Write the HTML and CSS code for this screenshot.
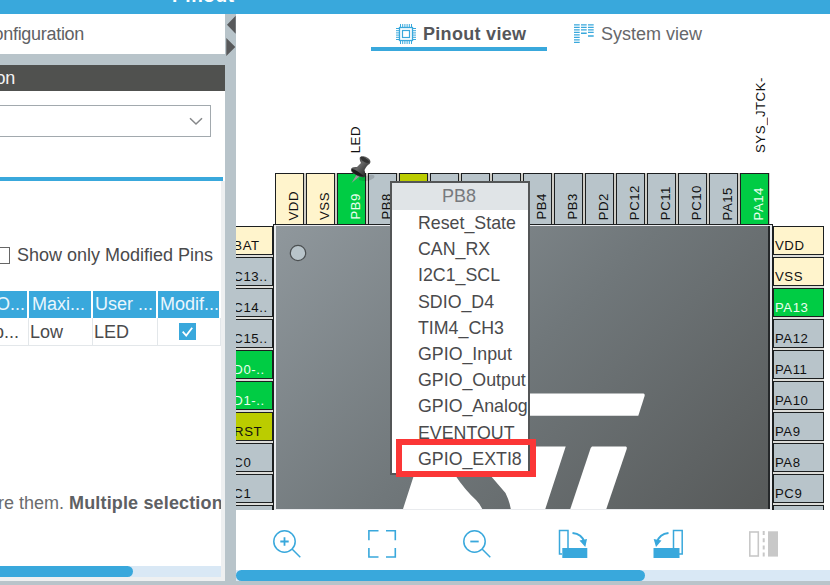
FILE: index.html
```html
<!DOCTYPE html>
<html lang="en">
<head>
    <meta charset="UTF-8">
    <meta name="viewport" content="width=device-width, initial-scale=1.0">
    <title>Pinout &amp; Configuration</title>
    <link rel="stylesheet" href="styles.css">
</head>

<body>
    <header class="topbar"><span>Pinout</span></header>

    <div class="main">
        <!-- left: gpio configuration -->
        <div class="side">
            <div class="side-tab"><span>Configuration</span></div>
            <div class="side-title"><span>Configuration</span></div>
            <div class="side-top">
                <div class="select">
                    <svg width="14" height="9" viewBox="0 0 14 9"><path d="M1 1.2L7 7L13 1.2" fill="none" stroke="#858789" stroke-width="1.5"/></svg>
                </div>
            </div>
            <div class="side-line"></div>
            <div class="side-body">
                <label class="modified"><span class="box"></span>Show only Modified Pins</label>
                <div class="table">
                    <div class="th">GPIO O...</div><div class="th">Maxi...</div><div class="th">User ...</div><div class="th">Modif...</div>
                    <div class="td">Outp...</div><div class="td">Low</div><div class="td">LED</div>
                    <div class="td center">
                        <span class="checked"><svg width="17" height="17" viewBox="0 0 17 17"><path d="M3.7 8.7L7.2 12.6L13.2 4.7" fill="none" stroke="#fff" stroke-width="1.8"/></svg></span>
                    </div>
                </div>
                <p class="hint"><span>configure them. <b>Multiple selection</b></span></p>
                <div class="scroll"><div class="thumb"></div></div>
            </div>
        </div>

        <div class="splitter">
            <svg width="11" height="44" viewBox="0 0 11 44"><path d="M10.7 1.7V19.7L2 10.7ZM1.3 24V42L10.3 33Z" fill="#58595b"/></svg>
        </div>

        <!-- right: chip view -->
        <div class="view">
            <nav class="tabs">
                <div class="tab active">
                    <svg width="20" height="20" viewBox="0 0 20 20" fill="none" stroke="#39a8dc">
                        <rect x="3.5" y="3.5" width="13" height="13" stroke-width="1.3"/>
                        <rect x="6.5" y="6.5" width="7" height="7" stroke-width="1.2"/>
                        <path d="M4.5 0V3M6.7 0V3M8.9 0V3M11.1 0V3M13.3 0V3M15.5 0V3M4.5 17V20M6.7 17V20M8.9 17V20M11.1 17V20M13.3 17V20M15.5 17V20M0 4.5H3M0 6.7H3M0 8.9H3M0 11.1H3M0 13.3H3M0 15.5H3M17 4.5H20M17 6.7H20M17 8.9H20M17 11.1H20M17 13.3H20M17 15.5H20"/>
                    </svg>
                    <span>Pinout view</span>
                </div>
                <div class="tab">
                    <svg width="20" height="20" viewBox="0 0 20 20" fill="none" stroke="#39a8dc" stroke-width="1.4">
                        <path d="M0 .9H5.7M0 3.400H5.700M0 5.900H5.700M0 8.400H5.700M0 10.900H5.700M0 13.400H5.700M0 15.900H5.700M0 18.400H5.700M7 .9H12.700M7 3.400H12.700M7 5.900H12.700M7 9.200H12.700M14 .9H19.700M14 3.400H19.700M14 5.900H19.700M14 8.400H19.700M14 12H19.700"/>
                    </svg>
                    <span>System view</span>
                </div>
            </nav>

            <div class="canvas">
                <div class="signals">
                    <span class="sig led">LED</span>
                    <span class="sig jtck">SYS_JTCK-</span>
                </div>
                <div class="pins-top">
                    <div class="pin power"><span>VDD</span></div>
                    <div class="pin power"><span>VSS</span></div>
                    <div class="pin used"><span>PB9</span></div>
                    <div class="pin"><span>PB8</span></div>
                    <div class="pin boot"><span>BO..</span></div>
                    <div class="pin"><span>PB7</span></div>
                    <div class="pin"><span>PB6</span></div>
                    <div class="pin"><span>PB5</span></div>
                    <div class="pin"><span>PB4</span></div>
                    <div class="pin"><span>PB3</span></div>
                    <div class="pin"><span>PD2</span></div>
                    <div class="pin"><span>PC12</span></div>
                    <div class="pin"><span>PC11</span></div>
                    <div class="pin"><span>PC10</span></div>
                    <div class="pin"><span>PA15</span></div>
                    <div class="pin used"><span>PA14</span></div>
                </div>
                <div class="chip-row">
                    <div class="pins-side left">
                        <div class="pin power">VBAT</div>
                        <div class="pin">PC13..</div>
                        <div class="pin">PC14..</div>
                        <div class="pin">PC15..</div>
                        <div class="pin used">PD0-..</div>
                        <div class="pin used">PD1-..</div>
                        <div class="pin boot">NRST</div>
                        <div class="pin">PC0</div>
                        <div class="pin">PC1</div>
                        <div class="pin"></div>
                    </div>
                    <div class="chip">
                        <!-- pin 1 mark and ST logo -->
                        <svg width="492" height="283" viewBox="276 227 492 283">
                            <defs>
                                <linearGradient id="body" gradientUnits="userSpaceOnUse" x1="330" y1="180" x2="700" y2="560">
                                    <stop offset="0" stop-color="#8f979c"/>
                                    <stop offset=".5" stop-color="#70777a"/>
                                    <stop offset="1" stop-color="#585b5b"/>
                                </linearGradient>
                            </defs>
                            <rect x="276" y="227" width="492" height="283" fill="url(#body)"/>
                            <circle cx="298" cy="254" r="7.7" fill="#b8c4ca" stroke="#4b4f51" stroke-width="1.2"/>
                            <g fill="#fff">
                                <path d="M440 394.5H643.5Q645 394.7 644.6 397L638.3 416.7H440Z"/>
                                <path d="M480 447.5H565.7L545.3 510H510.8Q509.500 502 505.5 494L490 476Z"/>
                                <path d="M592 447.5H626Q627.3 448 626.7 450L606.3 510H570.3L590.7 449Z"/>
                                <path d="M414 476L403 510H482.3Q480 505 476 501Q465 491 455 476Z"/>
                            </g>
                        </svg>
                    </div>
                    <div class="pins-side">
                        <div class="pin power">VDD</div>
                        <div class="pin power">VSS</div>
                        <div class="pin used">PA13</div>
                        <div class="pin">PA12</div>
                        <div class="pin">PA11</div>
                        <div class="pin">PA10</div>
                        <div class="pin">PA9</div>
                        <div class="pin">PA8</div>
                        <div class="pin">PC9</div>
                        <div class="pin"></div>
                    </div>
                </div>

                <svg class="pushpin" width="28" height="32" viewBox="0 0 28 32">
                    <defs>
                        <linearGradient id="pinMetal" x1="0" y1="0" x2="1" y2="1">
                            <stop offset="0" stop-color="#222"/>
                            <stop offset=".45" stop-color="#666"/>
                            <stop offset="1" stop-color="#111"/>
                        </linearGradient>
                    </defs>
                    <path d="M10 23L20 20Q27 19 25 23Q19 28 10 25Z" fill="#000" opacity=".15"/>
                    <path d="M8 19L2.5 28L11 21Z" fill="#999"/>
                    <path d="M2 14Q3 11.500 8 12L12 8Q10 4 11 2Q15 0 19 3Q23 6 20.500 9Q18 10 15.500 15Q17 20 15.500 22Q12 23 7 20Q1 17 2 14Z" fill="url(#pinMetal)"/>
                    <path d="M12 1.500Q17 2 20.500 7Q18 9 14.500 6.500Q11 4 12 1.500Z" fill="#333"/>
                    <path d="M3 14Q8 15 14.500 21Q8 21.500 4.500 18Q2 16 3 14Z" fill="#1b1b1b"/>
                </svg>
            </div>

            <div class="tools">
                <svg width="30" height="30" viewBox="0 0 30 30" fill="none" stroke="#39a8dc" stroke-width="1.5">
                    <circle cx="12.500" cy="12.500" r="10.700"/><path d="M20 20L28.300 28.300"/><path d="M8.300 12.500H16.700M12.500 8.300V16.700" stroke-width="1.800"/>
                </svg>
                <svg width="30" height="30" viewBox="0 0 30 30" fill="none" stroke="#39a8dc" stroke-width="1.600">
                    <path d="M11.500 1.700H1.900V11.300M19 1.700H28.300V11.300M1.900 19V28H11.500M19 28H28.300V19"/>
                </svg>
                <svg width="30" height="30" viewBox="0 0 30 30" fill="none" stroke="#39a8dc" stroke-width="1.500">
                    <circle cx="12.500" cy="12.500" r="10.700"/><path d="M20 20L28.300 28.300"/><path d="M8.300 12.500H16.700" stroke-width="1.800"/>
                </svg>
                <svg class="nudge" width="30" height="30" viewBox="0 0 30 30" fill="none" stroke="#39a8dc" stroke-width="1.500">
                    <path d="M4 25H1.500V1.600H10V19"/><path d="M14.500 4Q24 5 26.300 13" stroke-width="2"/>
                    <path d="M21.500 11.500L29 10L27.300 18Z" fill="#39a8dc" stroke="none"/>
                    <path d="M4.300 19H29.300V29H4.300Z" fill="#39a8dc" stroke="none"/>
                </svg>
                <svg class="nudge" width="30" height="30" viewBox="0 0 30 30" fill="none" stroke="#39a8dc" stroke-width="1.500">
                    <path d="M26 25H29.200V1.600H20.500V19"/><path d="M15.500 4Q6.500 5 4 13" stroke-width="2"/>
                    <path d="M.7 10L8.500 11.500L3 18Z" fill="#39a8dc" stroke="none"/>
                    <path d="M.5 19H26.500V29H.5Z" fill="#39a8dc" stroke="none"/>
                </svg>
                <svg class="nudge" width="30" height="30" viewBox="0 0 30 30" fill="none" stroke="#c8c8c8" stroke-width="1.600">
                    <rect x="1.800" y="3" width="8.500" height="24"/>
                    <path d="M15.700 2V27.500" stroke-width="2" stroke-dasharray="4 3.200"/>
                    <rect x="20" y="2.300" width="10" height="25.300" fill="#c8c8c8" stroke="none"/>
                </svg>
            </div>
            <div class="scroll"><div class="thumb"></div></div>
        </div>
    </div>

    <!-- pin function menu -->
    <div class="menu">
        <div class="menu-title">PB8</div>
        <div class="menu-item">Reset_State</div>
        <div class="menu-item">CAN_RX</div>
        <div class="menu-item">I2C1_SCL</div>
        <div class="menu-item">SDIO_D4</div>
        <div class="menu-item">TIM4_CH3</div>
        <div class="menu-item">GPIO_Input</div>
        <div class="menu-item">GPIO_Output</div>
        <div class="menu-item">GPIO_Analog</div>
        <div class="menu-item">EVENTOUT</div>
        <div class="menu-item">GPIO_EXTI8</div>
    </div>
    <div class="highlight"></div>
</body>

</html>
```
FILE: styles.css
```css
* {
    box-sizing: border-box;
}

body {
    display: flex;
    flex-direction: column;
    position: relative;
    width: 830px;
    height: 585px;
    margin: 0;
    overflow: hidden;
    background: #b8c4ca;
    color: #4a4a4c;
    font-family: "Liberation Sans", Arial, sans-serif;
    font-size: 18px;
}

svg {
    display: block;
    flex: none;
}

.topbar {
    flex: none;
    height: 14px;
    padding-left: 172px;
    overflow: hidden;
    background: #39a8dc;
    color: #fff;
    font-size: 19px;
    font-weight: bold;
    letter-spacing: 0.6px;
}

.topbar span {
    display: block;
    height: 20px;
    line-height: 20px;
    margin-top: -14px;
}

.main {
    display: flex;
    flex: 1;
    min-height: 0;
}

/* left panel */
.side {
    display: flex;
    flex-direction: column;
    flex: none;
    width: 225px;
    height: 567px;
    overflow: hidden;
}

.side-tab,
.side-title {
    display: flex;
    justify-content: flex-end;
    align-items: center;
    flex: none;
    white-space: nowrap;
}

.side-tab {
    height: 40px;
    padding-right: 141px;
    background: #fff;
    color: #606164;
    letter-spacing: -0.3px;
}

.side-title {
    height: 26px;
    margin-top: 11px;
    padding-right: 210px;
    background: #50514f;
    color: #f4f4f4;
    letter-spacing: -0.2px;
}

.side-top {
    flex: none;
    height: 86px;
    padding-top: 14px;
    background: #fff;
}

.select {
    display: flex;
    align-items: center;
    justify-content: flex-end;
    width: 211px;
    height: 32px;
    padding-right: 7px;
    border: 1px solid #a2a9ae;
    border-left: none;
}

.side-line {
    flex: none;
    height: 4px;
    background: #39a8dc;
    border-right: 2px solid #fff;
}

.side-body {
    flex: 1;
    display: flex;
    flex-direction: column;
    border-right: 4px solid #eef0f1;
    border-bottom: 4px solid #eef0f1;
    background: #fff;
}

.modified {
    display: flex;
    align-items: center;
    height: 22px;
    margin-top: 63px;
    white-space: nowrap;
}

.box {
    width: 17px;
    height: 17px;
    margin: 0 7px 0 -7px;
    border: 1.5px solid #666;
}

.table {
    display: grid;
    grid-template-columns: 91px 64px 65px 63px;
    grid-template-rows: 27px 28px;
    width: 283px;
    margin: 25px 0 0 -62px;
}

.th {
    margin-right: 2px;
    padding-left: 3px;
    background: #39a8dc;
    color: #eaf6fc;
    line-height: 27px;
    white-space: nowrap;
}

.th:nth-child(3),
.th:nth-child(4) {
    padding-left: 2px;
}

.th:first-child,
.td:nth-child(5) {
    padding: 0 2px 0 0;
    text-align: right;
}

.td:nth-child(5) {
    padding-right: 9px;
}

.td {
    padding-left: 1px;
    border-right: 1px solid #e3e7ea;
    border-bottom: 1px solid #e3e7ea;
    line-height: 28px;
}

.center {
    display: flex;
    align-items: center;
    justify-content: center;
    padding-right: 4px;
}

.checked {
    width: 17px;
    height: 17px;
    background: #39a8dc;
}

.hint {
    display: flex;
    width: 221px;
    height: 22px;
    margin: 146px 0 0;
    overflow: hidden;
    color: #6a6b6e;
    line-height: 22px;
    white-space: nowrap;
}

.hint span {
    margin-left: -60px;
}

.hint b {
    color: #5e6063;
    letter-spacing: 0.15px;
}

.scroll {
    flex: none;
    height: 11px;
    background: #d9e8f5;
}

.side-body .scroll {
    margin-top: auto;
}

.thumb {
    width: 409px;
    height: 11px;
    border-radius: 6px;
    background: #39a8dc;
}

.side-body .thumb {
    width: 133px;
    border-radius: 0 6px 6px 0;
}

.splitter {
    flex: none;
    width: 11px;
}

/* chip view */
.view {
    display: flex;
    flex-direction: column;
    flex: 1;
    height: 567px;
    min-width: 0;
    background: #fff;
}

.tabs {
    display: flex;
    gap: 2px;
    flex: none;
    height: 41px;
    padding-left: 135px;
    color: #66676a;
}

.tab {
    display: flex;
    align-items: center;
    gap: 7px;
    width: 176px;
    height: 38px;
    padding: 2px 0 0 25px;
    white-space: nowrap;
}

.tab.active {
    height: 37px;
    padding-top: 7px;
    border-bottom: 4px solid #39a8dc;
    color: #55565a;
    font-weight: bold;
    letter-spacing: 0.3px;
}

.canvas {
    position: relative;
    flex: none;
    height: 455px;
    overflow: hidden;
    color: #111;
    font-size: 13.2px;
    letter-spacing: 0.55px;
    line-height: 16px;
}

.signals {
    display: flex;
    align-items: flex-end;
    height: 98px;
}

.sig,
.pins-top span {
    writing-mode: vertical-rl;
    transform: rotate(180deg);
    white-space: nowrap;
}

.led {
    margin-left: 112px;
}

.jtck {
    margin-left: 389px;
}

.pins-top {
    display: flex;
    gap: 2px;
    height: 51px;
    margin-top: 20px;
    padding-left: 39px;
    background: linear-gradient(90deg, #fff 39px, #cfcdc6 39px, #cfcdc6 534px, #fff 534px);
}

.pin {
    flex: none;
    border: 1.5px solid #1c1f20;
    background: #b8c4ca;
    white-space: nowrap;
}

.pins-top .pin {
    display: flex;
    align-items: flex-end;
    width: 29px;
    border-bottom: none;
    padding: 0 0 4px 9.5px;
    overflow: hidden;
}

.pin.power {
    background: #fff4cc;
}

.pin.used {
    background: #00cc44;
    color: #eaffef;
}

.pin.boot {
    background: #bbcc00;
}

.chip-row {
    display: flex;
    height: 286px;
}

.pins-side {
    display: flex;
    flex-direction: column;
    gap: 2px;
    flex: none;
    width: 51px;
    height: 286px;
    margin-top: 2px;
    overflow: hidden;
    background: #dcdcd8;
}

.pins-side.left {
    align-items: flex-end;
    width: 37px;
}

.pins-side .pin {
    width: 51px;
    height: 29px;
    padding: 11px 0 0 1px;
}

.chip {
    flex: none;
    width: 500px;
    height: 290px;
    padding: 1px 1px 0 1px;
    border: 1.5px solid #1c1f20;
    border-bottom: none;
    background: #e9ebee;
}

.chip svg {
    box-sizing: content-box;
    margin-left: 1px;
    border-right: 2px solid #25282a;
}

.pushpin {
    position: absolute;
    left: 113px;
    top: 100px;
}

.tools {
    display: flex;
    gap: 65px;
    flex: none;
    height: 60px;
    padding: 19px 0 0 36px;
}

.nudge {
    margin: 0 -1px 0 1px;
}

/* popup */
.menu {
    position: absolute;
    left: 390px;
    top: 181px;
    width: 140px;
    height: 294px;
    overflow: hidden;
    border: 2px solid #545657;
    background: #fff;
    line-height: 26.2px;
}

.menu-title {
    height: 27px;
    padding-right: 2px;
    background: #e0e4e7;
    color: #77797d;
    line-height: 27px;
    text-align: center;
}

.menu-item {
    height: 26.2px;
    padding-left: 26px;
    font-size: 17.8px;
}

.highlight {
    position: absolute;
    left: 396px;
    top: 439px;
    width: 140px;
    height: 38px;
    border: 6px solid #fb3636;
}
```
